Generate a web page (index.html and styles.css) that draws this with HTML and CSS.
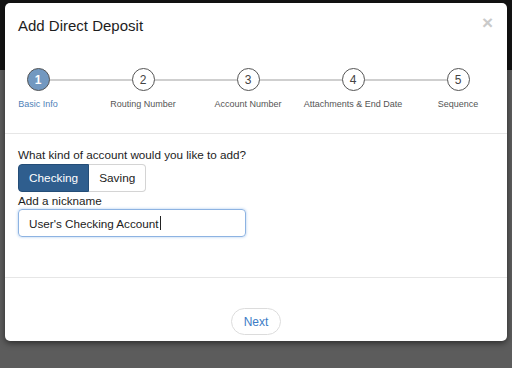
FILE: index.html
```html
<!DOCTYPE html>
<html lang="en">
<head>
  <meta charset="UTF-8">
  <title>Add Direct Deposit</title>
  <link rel="stylesheet" href="styles.css">
</head>
<body>
<div class="modal">
  <div class="modal-header">
    <div class="title-row">
      <h1>Add Direct Deposit</h1>
      <span class="fechar">×</span>
    </div>
    <div class="stepper">
      <div class="step ativo"><span class="bola">1</span><span class="rotulo">Basic Info</span></div>
      <div class="step"><span class="bola">2</span><span class="rotulo">Routing Number</span></div>
      <div class="step"><span class="bola">3</span><span class="rotulo">Account Number</span></div>
      <div class="step"><span class="bola">4</span><span class="rotulo">Attachments &amp; End Date</span></div>
      <div class="step"><span class="bola">5</span><span class="rotulo">Sequence</span></div>
    </div>
  </div>

  <div class="modal-body">
    <p class="pergunta">What kind of account would you like to add?</p>
    <div class="btn-group">
      <button class="btn-tipo selecionado">Checking</button>
      <button class="btn-tipo">Saving</button>
    </div>
    <label class="pergunta" for="nick">Add a nickname</label>
    <div class="campo"><span>User's Checking Account</span><span class="cursor"></span></div>
  </div>

  <div class="modal-footer">
    <button class="btn-next">Next</button>
  </div>
</div>
</body>
</html>
```

FILE: styles.css
```css
html, body {
  margin: 0;
  padding: 0;
  font-family: 'Liberation Sans', Arial, sans-serif;
  color: #222;
}
body {
  height: 368px;
  overflow: hidden;
  background: linear-gradient(#141414 0, #141414 70px, #5c5c5c 70px);
}
.modal {
  margin: 3px 5px 0 5px;
  width: 502px;
  height: 338px;
  background: #fff;
  border-radius: 5px;
  box-shadow: 0 2px 6px #0008;
  display: flex;
  flex-direction: column;
  overflow: hidden;
}
.modal-header {
  flex-shrink: 0;
  padding: 13px 14px 23px 13px;
  border-bottom: 1px solid #e6e6e6;
}
.title-row {
  display: flex;
  justify-content: space-between;
  align-items: center;
  height: 20px;
}
h1 {
  margin: 0;
  font-size: 15px;
  font-weight: normal;
  color: #1d1d1d;
  line-height: 20px;
}
.fechar {
  font-size: 19px;
  font-weight: bold;
  color: #cacaca;
  line-height: 20px;
  margin-top: -6px;
}
.stepper {
  position: relative;
  display: grid;
  grid-template-columns: repeat(5, 40px);
  column-gap: 65px;
  margin-top: 32px;
}
.stepper::before {
  content: '';
  position: absolute;
  left: 20px;
  width: 420px;
  top: 11px;
  height: 2px;
  background: #cfcfcf;
}
.step {
  display: flex;
  flex-direction: column;
  align-items: center;
  position: relative;
}
.bola {
  width: 21px;
  height: 21px;
  border: 1.5px solid #555;
  border-radius: 50%;
  background: #fff;
  color: #444;
  font-size: 12px;
  display: flex;
  align-items: center;
  justify-content: center;
  z-index: 1;
}
.rotulo {
  margin-top: 8px;
  font-size: 9px;
  line-height: 11px;
  color: #555;
  white-space: nowrap;
}
.step.ativo .bola {
  background: #7298c0;
  color: #fff;
  font-weight: bold;
}
.step.ativo .rotulo {
  color: #4f82b8;
}
.modal-body {
  flex-shrink: 0;
  height: 144px;
  box-sizing: border-box;
  padding: 14px 13px 0 13px;
  border-bottom: 1px solid #e6e6e6;
}
.pergunta {
  display: block;
  margin: 0;
  font-size: 11.7px;
  line-height: 14px;
  color: #1d1d1d;
}
.btn-group {
  display: flex;
  margin: 2px 0 2px 0;
}
.btn-tipo {
  font-family: inherit;
  font-size: 11.8px;
  height: 28px;
  padding: 0 10px;
  border: 1px solid #d4d4d4;
  background: #fff;
  color: #222;
  border-radius: 0 4px 4px 0;
  border-left: none;
}
.btn-tipo.selecionado {
  background: #2f5e8e;
  border: 1px solid #244d77;
  color: #fff;
  border-radius: 4px 0 0 4px;
}
.campo {
  margin-top: 1px;
  width: 206px;
  height: 26px;
  border: 1px solid #8db3e2;
  border-radius: 4px;
  box-shadow: 0 0 3px #a9c8ee;
  padding: 0 10px;
  display: flex;
  align-items: center;
  font-size: 11.7px;
  color: #222;
}
.cursor {
  width: 1px;
  height: 14px;
  background: #222;
  margin-left: 1px;
}
.modal-footer {
  flex: 1;
  display: flex;
  justify-content: center;
  align-items: flex-start;
  padding-top: 30px;
}
.btn-next {
  font-family: inherit;
  width: 50px;
  height: 27px;
  border: 1px solid #dcdcdc;
  border-radius: 14px;
  background: #fff;
  color: #3c7cc6;
  font-size: 12px;
  padding: 0;
}
```
